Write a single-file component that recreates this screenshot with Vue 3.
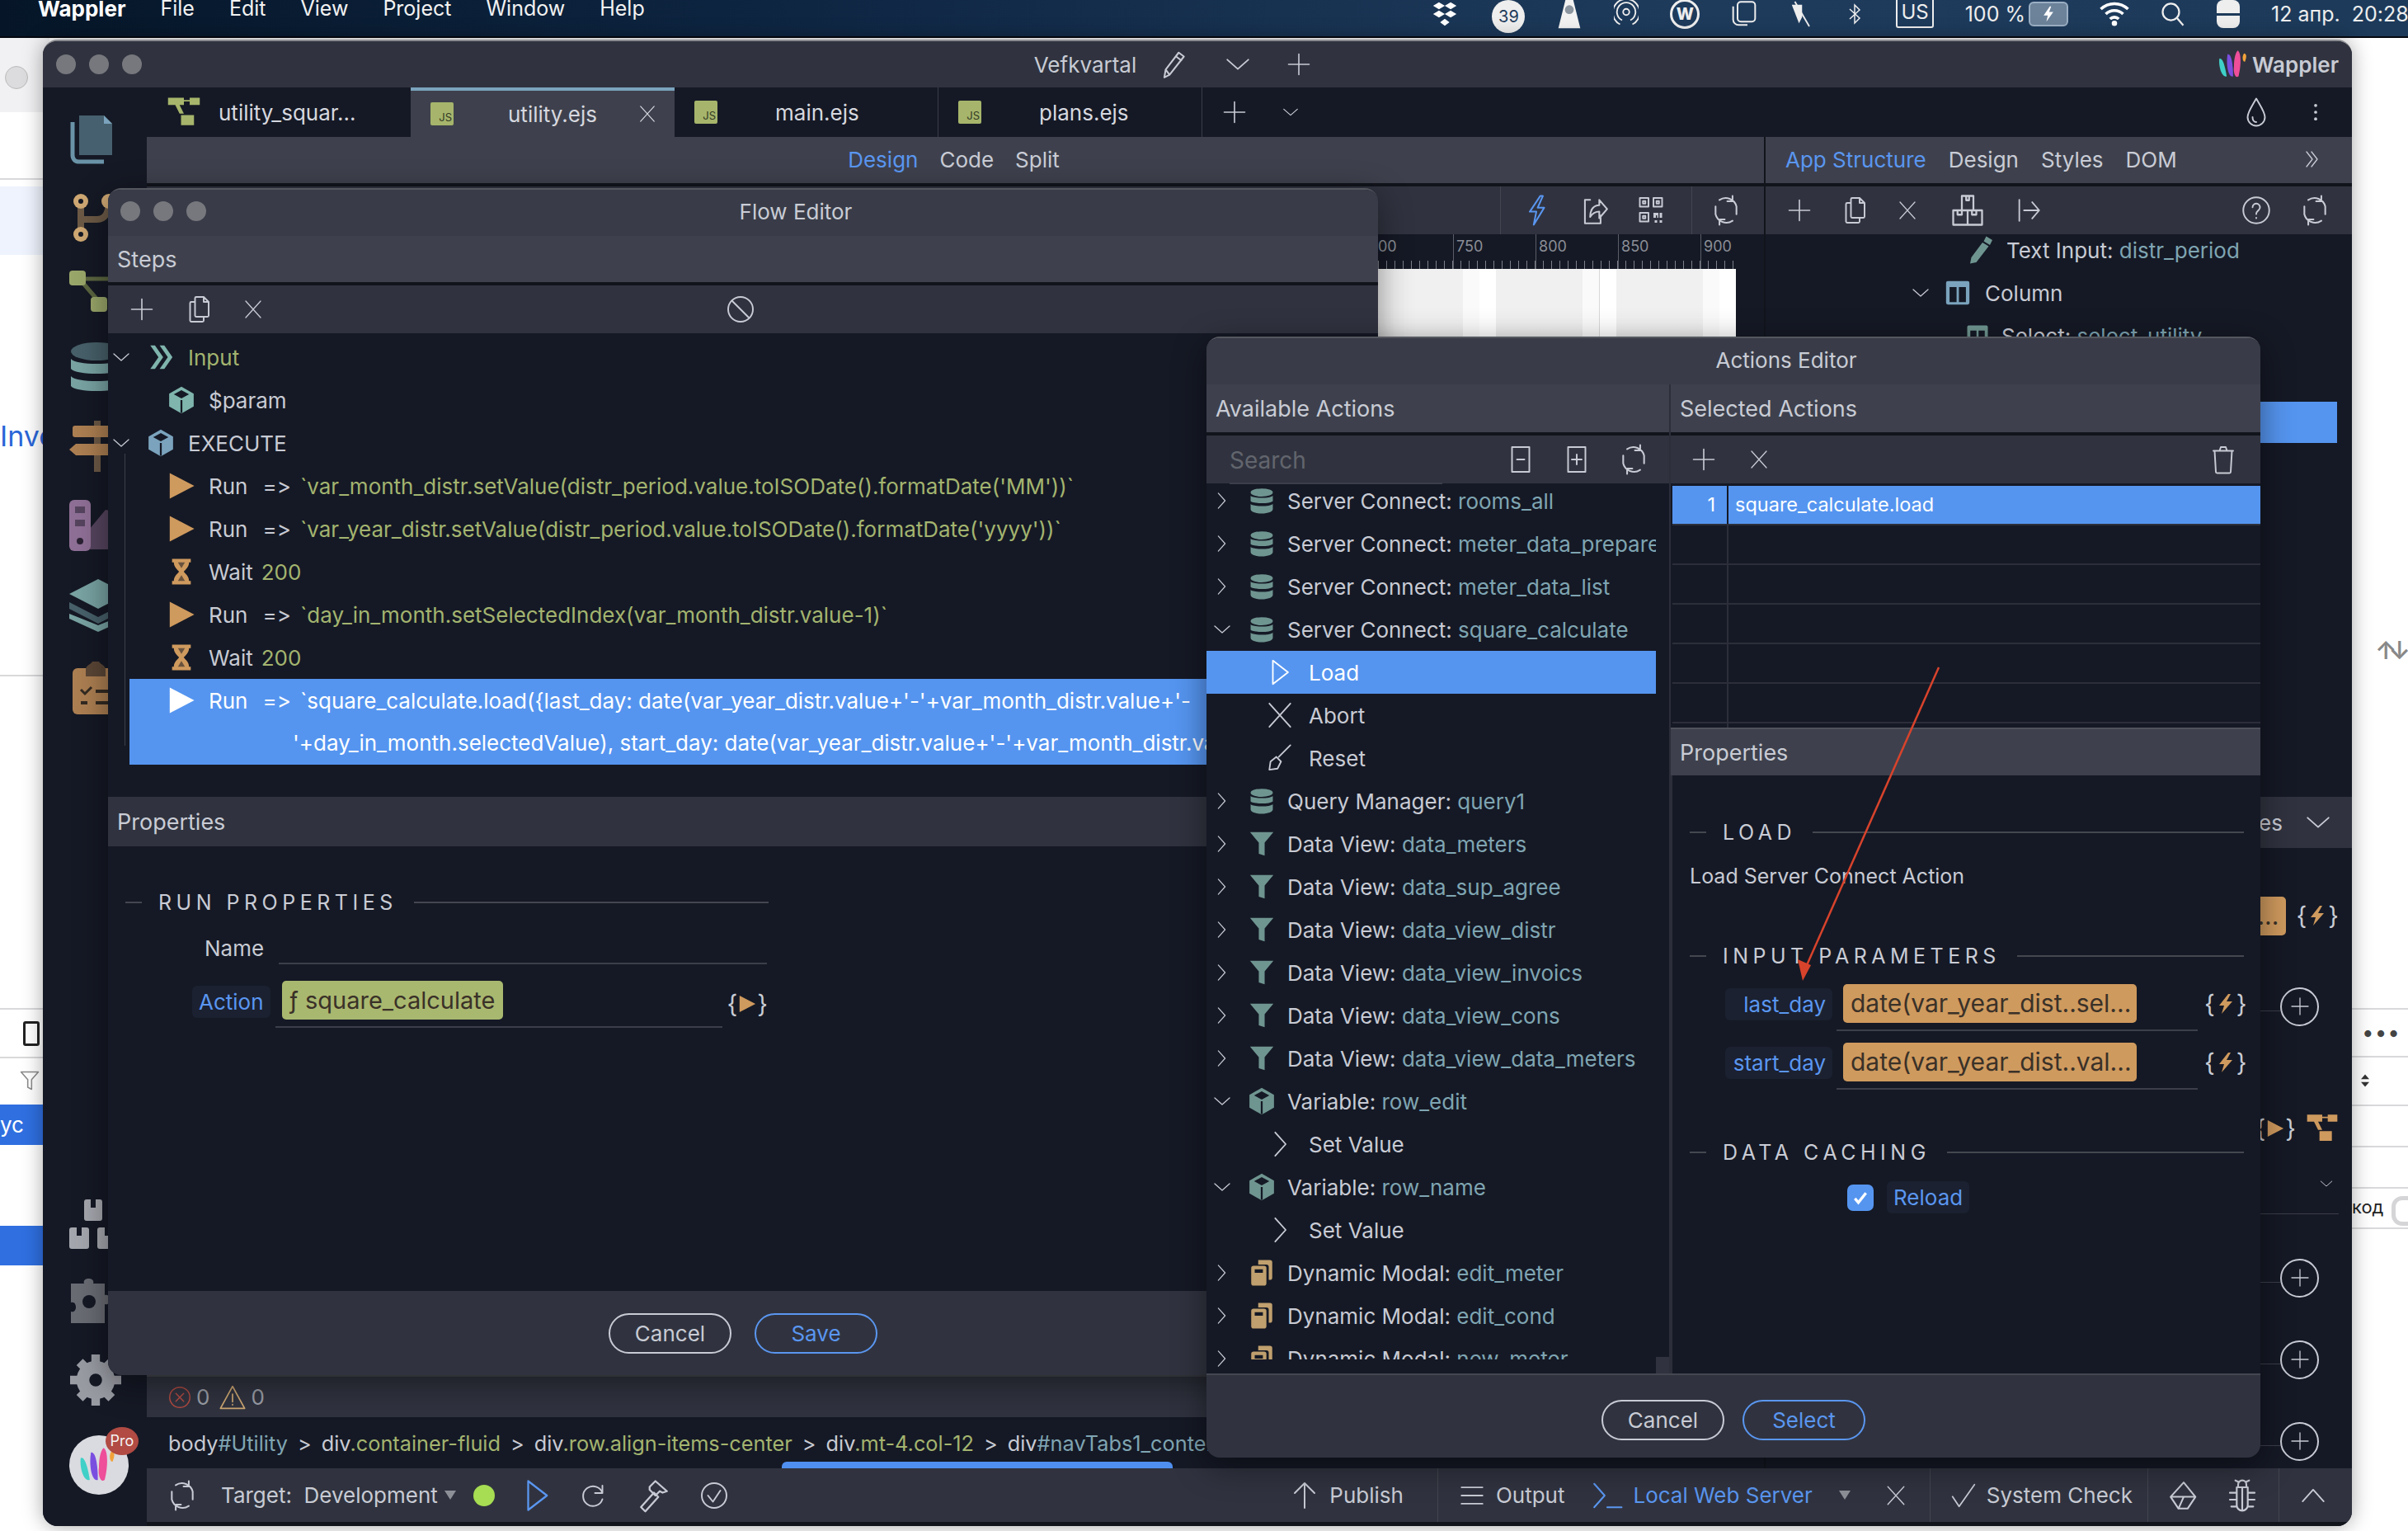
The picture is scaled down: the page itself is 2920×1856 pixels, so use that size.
<script setup>
import { h } from "vue";

const line = (d) =>
  `<path d="${d}" fill="none" stroke="currentColor" stroke-width="1.3" stroke-linecap="round" stroke-linejoin="round"/>`;
const solid = (d) => `<path d="${d}" fill="currentColor"/>`;

const icons = {
  plus: line("M12 2v20M2 12h20"),
  x: line("M3 2l18 20M21 2L3 22"),
  chevD: line("M3 8l9 8 9-8"),
  chevR: line("M8 2l9 10-9 10"),
  copy: line("M10 2h6l4 4v11a1 1 0 0 1-1 1h-9a1 1 0 0 1-1-1V3a1 1 0 0 1 1-1zM16 2v4h4M9 6H6a1 1 0 0 0-1 1v14a1 1 0 0 0 1 1h9a1 1 0 0 0 1-1v-3"),
  ban: '<circle cx="12" cy="12" r="10" fill="none" stroke="currentColor" stroke-width="1.3"/>' + line("M5 5l14 14"),
  pencil: line("M5 22l1-6L16 3l4 3L9 20zM14 6l4 3M6 16l3 4"),
  pencilSolid: solid("M17 1l5 3-2 4-5-3zM14 6l5 3L9 22l-5 1 1-5z"),
  drop: line("M12 1c4 7 7 11 7 15a7 7 0 0 1-14 0c0-4 3-8 7-15zM9 16c0 2 1 4 3 4"),
  dots: '<circle cx="12" cy="5" r="1.6" fill="currentColor"/><circle cx="12" cy="12" r="1.6" fill="currentColor"/><circle cx="12" cy="19" r="1.6" fill="currentColor"/>',
  bolt: line("M15 1L7 13h5l-2 10 8-13h-5l4-9z"),
  boltFill: solid("M15 0L4 14h6L7 24l13-15h-7l5-9z"),
  share: line("M9 4H5v18h12v-6M9 17c0-6 3-9 7-9V4l6 7-6 7v-5c-3 0-5 1-7 4z"),
  qr: line("M3 2h7v7H3zM14 2h7v7h-7zM3 14h7v7H3zM5.5 4.5h2v2h-2zM16.5 4.5h2v2h-2zM5.5 16.5h2v2h-2z") + solid("M14 14h4v4h-1v-2h-1v2h-2zM19 14h2v4h-2zM19 20h2v2h-2zM15 20h2v2h-2z"),
  refresh: line("M20 9a8.5 8.5 0 0 0-13-5M4 15a8.5 8.5 0 0 0 13 5M17 1v4h-4M7 23v-4h4M4 15V9M20 15V9"),
  help: '<circle cx="12" cy="12" r="10.5" fill="none" stroke="currentColor" stroke-width="1.3"/>' + line("M9 9.5a3 3 0 1 1 5 2.2c-1.2 1-2 1.6-2 3.3M12 18v.3"),
  box: line("M8 2h8v10H8zM11 2v3h2V2M2 12h20v10H2zM12 12v10M5 12v3h3v-3M15 12v3h3v-3"),
  indent: line("M4 3v18M8 12h13M15 5l6 7-6 7"),
  funnel: solid("M2 2h20l-7.5 9v11l-5-1.5V11z"),
  funnelLine: line("M3 3h18l-7 8v10l-4-2v-8z"),
  db: '<ellipse cx="12" cy="5" rx="9.5" ry="3.5" fill="currentColor"/>' + solid("M2.5 7.8c2 2.4 17 2.4 19 0v4.5c-2 2.4-17 2.4-19 0zM2.5 14.8c2 2.4 17 2.4 19 0v4.5c0 2-4 3.7-9.5 3.7s-9.5-1.7-9.5-3.7z"),
  cube: solid("M12 .5L22.5 6.5v11L12 23.5 1.5 17.5v-11z") + '<path d="M12 3.5L18.5 7 12 10.5 5.5 7z" fill="#151925"/><path d="M12 12v11" stroke="#151925" stroke-width="1.6"/>',
  play: solid("M2 1l21 11L2 23z"),
  playLine: line("M6 2l13 10L6 22z"),
  hourglass: solid("M4 1h16v3h-1.5c0 4-3 6-4.5 8 1.5 2 4.5 4 4.5 8H20v3H4v-3h1.5c0-4 3-6 4.5-8-1.5-2-4.5-4-4.5-8H4z") + '<path d="M9 4h6l-3 5zM12 15l-3 5h6z" fill="#151925" opacity=".55"/>',
  modal: solid("M9 1h10a2 2 0 0 1 2 2v13a2 2 0 0 1-2 2h-1V7a2 2 0 0 0-2-2H9zM5 6h9a2 2 0 0 1 2 2v13a2 2 0 0 1-2 2H5a2 2 0 0 1-2-2V8a2 2 0 0 1 2-2z") + '<rect x="6" y="9" width="7" height="3" fill="#151925"/>',
  trash: line("M5 5h14l-1 17a1 1 0 0 1-1 1H7a1 1 0 0 1-1-1zM4 5h16M9 5l1-3h4l1 3"),
  minusBox: line("M5 2h14v20H5zM9 12h6"),
  plusBox: line("M5 2h14v20H5zM8 12h8M12 8v8"),
  brush: line("M3 22l1-7 5-4 4 4-3 6zM11 11L21 1M9 11l4 4"),
  arrowUp: line("M12 2v20M4 10l8-8 8 8"),
  lines: line("M3 5h18M3 12h18M3 19h18"),
  term: line("M2 3l8 9-8 9M12 21h11"),
  check: line("M2 13l6 9L22 2"),
  eraser: line("M12 2l9 11-6 9H8l-6-9zM2 13h19M8 22l4-9"),
  bug: line("M8 6h8v13a4 4 0 0 1-8 0zM9 6V4a3 3 0 0 1 6 0v2M12 6v17M8 10H3M16 10h5M8 15H3M16 15h5M8 20H4M16 20h4M9 2L7 1M15 2l2-1"),
  caretUp: line("M3 17l9-10 9 10"),
  hammer: line("M3 20l9-10 3 3-9 10zM9 6l4-4 8 7-3 1-2-1-3 3-4-4z"),
  okCircle: '<circle cx="12" cy="12" r="10" fill="none" stroke="currentColor" stroke-width="1.3"/>' + line("M7 12l4 5 6-9"),
  redo: line("M19 10a8 8 0 1 0 0 5M19 4v6h-6"),
  errCircle: '<circle cx="12" cy="12" r="10.5" fill="none" stroke="currentColor" stroke-width="1.3"/>' + line("M8 8l8 8M16 8l-8 8"),
  warn: line("M12 2l11 20H1zM12 9v7M12 18.5v.3"),
  dbl: line("M7 3l7 9-7 9M13 3l7 9-7 9"),
  dblSolid: solid("M3 2h4l7 10-7 10H3l7-10zM11 2h4l7 10-7 10h-4l7-10z"),
  column: '<rect x="2" y="2" width="20" height="20" rx="1.5" fill="currentColor"/><path d="M5 7h6v13H5zM13 7h6v13h-6z" fill="#151925"/>',
  tree: solid("M1 2h11v5H9l3 6H9L6 7H1zM16 2h7v5h-7zM10 14h9v7h-9zM12 3.5h5v1h-5z"),
  sort: solid("M12 3l6 7H6zM12 21l-6-7h12z"),
};

const Icon = (props) =>
  h("svg", {
    viewBox: "0 0 24 24",
    width: props.w || props.s || 30,
    height: props.h || props.s || 30,
    class: "icon",
    innerHTML: icons[props.n],
  });
Icon.props = ["n", "s", "w", "h"];

const menuItems = ["File", "Edit", "View", "Project", "Window", "Help"];

const tabs = [
  { name: "utility_squar...", tree: true },
  { name: "utility.ejs", active: true },
  { name: "main.ejs" },
  { name: "plans.ejs" },
];

const flowRows = [
  { chev: true, icon: "dblSolid", cls: "teal", green: "Input", top: true },
  { icon: "cube", cls: "teal", text: "$param" },
  { chev: true, icon: "cube", cls: "steel", text: "EXECUTE", top: true },
  { icon: "play", cls: "orange", text: "Run", code: "`var_month_distr.setValue(distr_period.value.toISODate().formatDate('MM'))`" },
  { icon: "play", cls: "orange", text: "Run", code: "`var_year_distr.setValue(distr_period.value.toISODate().formatDate('yyyy'))`" },
  { icon: "hourglass", cls: "orange", text: "Wait", green: "200" },
  { icon: "play", cls: "orange", text: "Run", code: "`day_in_month.setSelectedIndex(var_month_distr.value-1)`" },
  { icon: "hourglass", cls: "orange", text: "Wait", green: "200" },
];

const actionRows = [
  { chev: "R", icon: "db", cls: "sage", key: "Server Connect:", val: "rooms_all" },
  { chev: "R", icon: "db", cls: "sage", key: "Server Connect:", val: "meter_data_prepare" },
  { chev: "R", icon: "db", cls: "sage", key: "Server Connect:", val: "meter_data_list" },
  { chev: "D", icon: "db", cls: "sage", key: "Server Connect:", val: "square_calculate" },
  { child: true, icon: "playLine", key: "Load", sel: true },
  { child: true, icon: "x", key: "Abort" },
  { child: true, icon: "brush", key: "Reset" },
  { chev: "R", icon: "db", cls: "sage", key: "Query Manager:", val: "query1" },
  { chev: "R", icon: "funnel", cls: "sage", key: "Data View:", val: "data_meters" },
  { chev: "R", icon: "funnel", cls: "sage", key: "Data View:", val: "data_sup_agree" },
  { chev: "R", icon: "funnel", cls: "sage", key: "Data View:", val: "data_view_distr" },
  { chev: "R", icon: "funnel", cls: "sage", key: "Data View:", val: "data_view_invoics" },
  { chev: "R", icon: "funnel", cls: "sage", key: "Data View:", val: "data_view_cons" },
  { chev: "R", icon: "funnel", cls: "sage", key: "Data View:", val: "data_view_data_meters" },
  { chev: "D", icon: "cube", cls: "sage", key: "Variable:", val: "row_edit" },
  { child: true, icon: "chevR", key: "Set Value" },
  { chev: "D", icon: "cube", cls: "sage", key: "Variable:", val: "row_name" },
  { child: true, icon: "chevR", key: "Set Value" },
  { chev: "R", icon: "modal", cls: "sand", key: "Dynamic Modal:", val: "edit_meter" },
  { chev: "R", icon: "modal", cls: "sand", key: "Dynamic Modal:", val: "edit_cond" },
  { chev: "R", icon: "modal", cls: "sand", key: "Dynamic Modal:", val: "new_meter" },
];

const crumbs = [
  ["body", "#Utility", "teal-text"],
  ["div", ".container-fluid", "green-text"],
  ["div", ".row.align-items-center", "green-text"],
  ["div", ".mt-4.col-12", "green-text"],
  ["div", "#navTabs1_content", "teal-text"],
];

const rulerLabels = ["700", "750", "800", "850", "900"];
const selectedRows = [1, 2, 3, 4, 5, 6];
</script>

<template>
  <div class="desktop">
    <!-- browser page behind the app, only its edges are visible -->
    <div class="behind">
      <div class="left-head"></div>
      <div class="left-circle"></div>
      <div class="left-band"></div>
      <div class="left-invo">Invo</div>
      <div class="hr hr-l1"></div>
      <div class="hr hr-l2"></div>
      <div class="hr hr-l3"></div>
      <div class="left-device"></div>
      <Icon n="funnelLine" :s="28" class="left-funnel" />
      <div class="left-yc">ус</div>
      <div class="left-blue"></div>
      <div class="hr hr-r1"></div>
      <div class="hr hr-r2"></div>
      <div class="hr hr-r3"></div>
      <div class="hr hr-r4"></div>
      <div class="hr hr-r5"></div>
      <div class="right-dots">•••</div>
      <div class="right-kod">код</div>
      <div class="right-toggle"></div>
      <Icon n="sort" :s="20" class="right-sort" />
      <div class="right-arrows">↑↓</div>
    </div>

    <header class="menubar">
      <b class="app-name">Wappler</b>
      <span v-for="m in menuItems" :key="m" class="menu-item">{{ m }}</span>
      <span class="grow"></span>
      <div class="tray">
        <svg width="38" height="34" viewBox="0 0 24 24" class="dropbox"><path d="M7 2l5 3-5 3-5-3zM17 2l5 3-5 3-5-3zM7 9l5 3-5 3-5-3zM17 9l5 3-5 3-5-3zM12 16l4 3-4 3-4-3z" fill="#fff"/></svg>
        <span class="tray-badge">39</span>
        <svg width="32" height="40" viewBox="0 0 24 30"><path d="M9 0h6l7 28H2z" fill="#f2f2f2"/><circle cx="12" cy="11" r="4" fill="#8c96a0"/></svg>
        <svg width="30" height="34" viewBox="0 0 24 24" fill="none" stroke="#eee" stroke-width="1.5"><circle cx="12" cy="10" r="3"/><path d="M8 18a9 9 0 1 1 8 0M6 22a13 13 0 1 1 12 0"/></svg>
        <span class="tray-w">W</span>
        <svg width="32" height="34" viewBox="0 0 24 24" fill="none" stroke="#eee" stroke-width="1.5"><rect x="6" y="1" width="16" height="18" rx="3"/><path d="M2 5v12a5 5 0 0 0 5 5h8"/></svg>
        <svg width="30" height="36" viewBox="0 0 24 24"><path d="M3 3h10v12l-3 6z" fill="#eee"/><path d="M6 0l14 24" stroke="#eee" stroke-width="1.5"/></svg>
        <svg width="24" height="36" viewBox="0 0 24 24" fill="none" stroke="#eee" stroke-width="1.5"><path d="M6 6l12 11-6 6V1l6 6L6 18"/></svg>
        <span class="tray-us">US</span>
        <span class="tray-text">100 %</span>
        <span class="tray-bat"><svg width="20" height="20" viewBox="0 0 24 24"><path d="M14 1L5 14h6l-2 9 10-14h-6l3-8z" fill="#fff"/></svg></span>
        <svg width="36" height="30" viewBox="0 0 24 20" fill="none" stroke="#fff" stroke-width="2.4"><path d="M1 6a16 16 0 0 1 22 0M5 10a10 10 0 0 1 14 0M8.5 14a5 5 0 0 1 7 0"/><circle cx="12" cy="17.5" r="1" fill="#fff"/></svg>
        <svg width="30" height="30" viewBox="0 0 24 24" fill="none" stroke="#eee" stroke-width="1.8"><circle cx="10" cy="10" r="8"/><path d="M16 16l6 7"/></svg>
        <span class="tray-cc"></span>
        <span class="tray-text clock">12 апр.&nbsp; 20:28</span>
      </div>
    </header>

    <div class="app-window">
      <div class="titlebar">
        <div class="lights"><i></i><i></i><i></i></div>
        <div class="title-center">
          <span class="title-name">Vefkvartal</span>
          <Icon n="pencil" :s="38" />
          <Icon n="chevD" :s="34" class="ml" />
          <Icon n="plus" :s="30" class="ml" />
        </div>
        <div class="title-logo">
          <svg width="40" height="36" viewBox="0 0 36 32">
            <path d="M2 10c3-2 6 6 8 19-5 2-9-10-8-19z" fill="#3fd0c8" />
            <path d="M11 5c4-1 6 10 6 24-5 2-8-12-6-24z" fill="#7a4fe0" />
            <path d="M22 1c4 2 4 16 1 28-4 3-6-5-5-11 0-6 1-14 4-17z" fill="#ee4e9a" />
            <path d="M29 4c4 1 2 6 1 9-2 1-4-5-1-9z" fill="#f2a23a" />
          </svg>
          <span>Wappler</span>
        </div>
      </div>

      <div class="app-body">
        <nav class="sidebar">
          <div class="side-top">
            <svg width="56" height="60" viewBox="0 0 56 60"><path d="M12 0h30l10 10v38H12z" fill="#47606f" /><path d="M42 0l10 10H42z" fill="#7ba3bd" /><path d="M4 8v40c0 5 3 8 8 8h30" fill="none" stroke="#6a93a8" stroke-width="5" /></svg>
            <svg width="68" height="60" viewBox="0 0 68 60"><path d="M14 10v40M14 32h20c8 0 14-6 14-22" stroke="#6d5a46" stroke-width="8" fill="none" /><circle cx="14" cy="10" r="9" fill="#cfa873" /><circle cx="14" cy="10" r="3" fill="#151925" /><circle cx="48" cy="10" r="9" fill="#cfa873" /><circle cx="14" cy="50" r="9" fill="#cfa873" /><circle cx="14" cy="50" r="3" fill="#151925" /></svg>
            <svg width="70" height="52" viewBox="0 0 70 52"><path d="M10 10h50M14 12l24 28" stroke="#5c6640" stroke-width="5" /><rect x="0" y="0" width="20" height="18" rx="4" fill="#9aa76a" /><rect x="26" y="32" width="20" height="18" rx="4" fill="#9aa76a" /></svg>
            <svg width="66" height="62" viewBox="0 0 66 62"><ellipse cx="33" cy="12" rx="31" ry="11" fill="#47606a" /><path d="M2 21c6 8 56 8 62 0v12c-6 8-56 8-62 0zM2 42c6 8 56 8 62 0v12c-6 8-56 8-62 0z" fill="#79a3a3" /></svg>
            <svg width="70" height="62" viewBox="0 0 70 62"><rect x="30" y="0" width="8" height="62" fill="#6d5a46" /><rect x="4" y="6" width="62" height="14" rx="3" fill="#ad7f52" /><path d="M8 28h56v14H8L0 35z" fill="#ad7f52" /></svg>
            <svg width="70" height="62" viewBox="0 0 70 62"><path d="M24 36l20-24 20 4v44H20z" fill="#56445f" /><rect x="0" y="0" width="26" height="62" rx="6" fill="#8f6f96" /><rect x="7" y="8" width="12" height="8" fill="#56445f" /><rect x="7" y="24" width="12" height="8" fill="#56445f" /><circle cx="13" cy="50" r="4" fill="#2a2233" /></svg>
            <svg width="70" height="64" viewBox="0 0 70 64"><path d="M35 0l35 18-35 18L0 18z" fill="#79a3a3" /><path d="M0 28l35 18 35-18v8L35 54 0 36z" fill="#47606a" /><path d="M0 42l35 14 35-14v6L35 64 0 48z" fill="#79a3a3" /></svg>
            <svg width="66" height="66" viewBox="0 0 66 66"><rect x="4" y="10" width="58" height="56" rx="6" fill="#ad7f52" /><path d="M20 12c0-6 6-6 8-10h8c2 4 8 4 8 10v8H20z" fill="#5b4636" /><path d="M14 36l5 5 8-8" stroke="#332a22" stroke-width="3" fill="none" /><path d="M32 38h24M32 52h24M14 52h8" stroke="#332a22" stroke-width="4" /></svg>
          </div>
          <div class="side-bottom">
            <svg width="58" height="60" viewBox="0 0 58 60"><rect x="18" y="0" width="22" height="26" rx="3" fill="#a5a7ae" /><rect x="0" y="34" width="24" height="26" rx="3" fill="#a5a7ae" /><rect x="34" y="34" width="24" height="26" rx="3" fill="#a5a7ae" /><path d="M26 0h6v10h-6zM9 34h6v10H9zM43 34h6v10h-6z" fill="#151925" /></svg>
            <svg width="60" height="56" viewBox="0 0 60 56"><path d="M2 6h16c-3-8 14-8 11 0h14v14c8-3 8 14 0 11v23H2V40c8 3 8-14 0-11z" fill="#6a6c74" /><circle cx="24" cy="28" r="8" fill="#151925" /></svg>
            <svg width="64" height="62" viewBox="0 0 24 24"><circle cx="12" cy="12" r="9" fill="#9a9ca4" /><circle cx="12" cy="12" r="3" fill="#151925" /><path d="M10 0h4v4h-4zM10 20h4v4h-4zM0 10h4v4H0zM20 10h4v4h-4zM3 5l3-3 3 3-3 3zM15 19l3-3 3 3-3 3zM3 19l3-3 3 3-3 3zM15 5l3-3 3 3-3 3z" fill="#9a9ca4" /></svg>
            <div class="avatar">
              <svg width="50" height="50" viewBox="0 0 36 32"><path d="M2 10c3-2 6 6 8 19-5 2-9-10-8-19z" fill="#3fd0c8" /><path d="M11 5c4-1 6 10 6 24-5 2-8-12-6-24z" fill="#7a4fe0" /><path d="M22 1c4 2 4 16 1 28-4 3-6-5-5-11 0-6 1-14 4-17z" fill="#ee4e9a" /><path d="M29 4c4 1 2 6 1 9-2 1-4-5-1-9z" fill="#f2a23a" /></svg>
              <span class="pro">Pro</span>
            </div>
          </div>
        </nav>

        <div class="content">
          <div class="tabs">
            <div v-for="t in tabs" :key="t.name" class="tab" :class="{ active: t.active }">
              <Icon v-if="t.tree" n="tree" :s="42" class="tab-tree" />
              <span v-else class="js-badge">JS</span>
              <span class="tab-name">{{ t.name }}</span>
              <Icon v-if="t.active" n="x" :s="22" class="tab-close" />
            </div>
            <Icon n="plus" :s="30" class="tab-plus" />
            <Icon n="chevD" :s="22" class="tab-more" />
            <span class="grow"></span>
            <Icon n="drop" :s="36" />
            <Icon n="dots" :s="28" class="tab-dots" />
          </div>

          <div class="work">
            <section class="design">
              <div class="head design-head">
                <span class="link">Design</span><span>Code</span><span>Split</span>
              </div>
              <div class="design-tools">
                <span class="grow"></span>
                <div class="tool-group">
                  <Icon n="bolt" :s="38" class="blue" />
                  <Icon n="share" :s="38" />
                  <Icon n="qr" :s="36" />
                </div>
                <div class="tool-group last"><Icon n="refresh" :s="38" /></div>
              </div>
              <div class="ruler-wrap">
                <div class="ruler">
                  <span v-for="r in rulerLabels" :key="r" class="ruler-cell">{{ r }}</span>
                </div>
                <div class="canvas">
                  <i></i><i></i><i></i>
                </div>
              </div>
              <span class="grow"></span>
              <div class="errors">
                <Icon n="errCircle" :s="28" class="red" /><span>0</span>
                <Icon n="warn" :s="32" class="sand-text" /><span>0</span>
              </div>
              <div class="crumbs">
                <template v-for="(c, i) in crumbs" :key="i">
                  <span v-if="i" class="crumb-sep">&gt;</span>
                  <span>{{ c[0] }}<span :class="c[2]">{{ c[1] }}</span></span>
                </template>
                <i class="crumb-scroll"></i>
              </div>
            </section>

            <aside class="side">
              <div class="head side-head">
                <span class="link">App Structure</span><span>Design</span><span>Styles</span><span>DOM</span>
                <span class="grow"></span>
                <Icon n="dbl" :s="24" />
              </div>
              <div class="side-tools">
                <Icon n="plus" :s="30" /><Icon n="copy" :s="36" /><Icon n="x" :s="24" />
                <Icon n="box" :s="42" class="tool-box" /><Icon n="indent" :s="34" class="tool-indent" />
                <span class="grow"></span>
                <Icon n="help" :s="36" /><Icon n="refresh" :s="38" />
              </div>
              <div class="side-tree">
                <div class="s-row s-input"><Icon n="pencilSolid" :s="36" class="sage" /><span>Text Input: <em>distr_period</em></span></div>
                <div class="s-row s-col"><Icon n="chevD" :s="24" /><Icon n="column" :s="34" class="steel" /><span>Column</span></div>
                <div class="s-row s-input"><Icon n="column" :s="30" class="sage" /><span>Select: <em>select_utility</em></span></div>
                <div class="s-blue"></div>
              </div>
              <div class="head side-props">
                <span class="grow"></span><span class="tail">Properties</span>
                <Icon n="chevD" :s="34" />
              </div>
              <div class="side-rows">
                <div class="sr sr-orange">
                  <span class="pill orange-pill">date(var...</span>
                  <span class="braces">{<Icon n="boltFill" :s="24" class="orange" />}</span>
                </div>
                <div class="sr sr-plus"><i></i><span class="round-plus"><Icon n="plus" :s="24" /></span></div>
                <div class="sr sr-tree">
                  <span class="braces">{<Icon n="play" :s="22" class="orange" />}</span>
                  <Icon n="tree" :s="40" class="orange" />
                </div>
                <div class="sr sr-chev"><Icon n="chevD" :s="18" /></div>
                <div class="sr sr-plus mt1"><i></i><span class="round-plus"><Icon n="plus" :s="24" /></span></div>
                <div class="sr sr-plus"><i></i><span class="round-plus"><Icon n="plus" :s="24" /></span></div>
                <div class="sr sr-plus"><i></i><span class="round-plus"><Icon n="plus" :s="24" /></span></div>
              </div>
            </aside>
          </div>

          <footer class="bottom-bar">
            <div class="bb-left">
              <Icon n="refresh" :s="38" class="bb-sync" />
              <span class="bb-target">Target:&nbsp; Development</span>
              <span class="caret"></span>
              <span class="green-dot"></span>
              <Icon n="playLine" :s="42" class="blue" />
              <Icon n="redo" :s="36" />
              <Icon n="hammer" :s="42" class="bb-nudge" />
              <Icon n="okCircle" :s="36" class="bb-nudge" />
            </div>
            <span class="grow"></span>
            <div class="bb-right">
              <div class="bb-cell publish"><Icon n="arrowUp" :s="36" /><span>Publish</span></div>
              <div class="bb-cell output">
                <Icon n="lines" :s="34" /><span>Output</span>
                <Icon n="term" :s="38" class="blue term" /><span class="link">Local Web Server</span>
                <span class="caret"></span>
                <Icon n="x" :s="26" class="out-x" />
              </div>
              <div class="bb-cell syscheck"><Icon n="check" :s="32" /><span>System Check</span></div>
              <div class="bb-cell gap2"><Icon n="eraser" :s="38" /><Icon n="bug" :s="40" /></div>
              <div class="bb-cell"><Icon n="caretUp" :s="34" /></div>
            </div>
          </footer>
        </div>
      </div>
    </div>

    <!-- Flow Editor window -->
    <div class="dialog flow">
      <div class="dlg-title">
        <div class="lights"><i></i><i></i><i></i></div>
        <span>Flow Editor</span>
      </div>
      <div class="head panel-head">Steps</div>
      <div class="flow-tools">
        <Icon n="plus" :s="30" /><Icon n="copy" :s="36" /><Icon n="x" :s="24" />
        <Icon n="ban" :s="36" class="flow-ban" />
      </div>
      <div class="flow-tree">
        <i class="flow-guide"></i>
        <div v-for="(r, i) in flowRows" :key="i" class="f-row" :class="{ top: r.top }">
          <Icon v-if="r.chev" n="chevD" :s="24" class="f-chev" />
          <Icon :n="r.icon" :s="34" :class="r.cls" />
          <span v-if="r.text">{{ r.text }}</span>
          <span v-if="r.code" class="arrow-sign">=&gt;</span>
          <span v-if="r.code" class="green-text">{{ r.code }}</span>
          <span v-if="r.green" class="green-text" :class="{ 'wait-val': r.text }">{{ r.green }}</span>
        </div>
        <div class="f-selected">
          <div class="f-row">
            <Icon n="play" :s="34" class="white" />
            <span>Run</span><span class="arrow-sign">=&gt;</span>
            <span>`square_calculate.load({last_day: date(var_year_distr.value+'-'+var_month_distr.value+'-</span>
          </div>
          <div class="f-row wrapped">
            '+day_in_month.selectedValue), start_day: date(var_year_distr.value+'-'+var_month_distr.value+'-'+day_in_month.selectedValue))})`
          </div>
        </div>
      </div>
      <div class="head panel-head props-head">Properties</div>
      <div class="flow-props">
        <div class="legend wide"><i></i><span>RUN PROPERTIES</span><b></b></div>
        <div class="name-row"><label>Name</label><span class="name-input"></span></div>
        <div class="action-row">
          <label class="tag">Action</label>
          <span class="field">
            <span class="pill green-pill">ƒ square_calculate</span>
          </span>
          <span class="braces">{<Icon n="play" :s="22" class="orange" />}</span>
        </div>
      </div>
      <div class="dlg-footer">
        <button class="btn">Cancel</button>
        <button class="btn primary">Save</button>
      </div>
    </div>

    <!-- Actions Editor window -->
    <div class="dialog actions">
      <div class="dlg-title"><span>Actions Editor</span></div>
      <div class="act-cols">
        <div class="act-left">
          <div class="head panel-head">Available Actions</div>
          <div class="act-tools">
            <span class="search">Search</span>
            <span class="grow"></span>
            <Icon n="minusBox" :s="36" /><Icon n="plusBox" :s="36" /><Icon n="refresh" :s="38" />
          </div>
          <div class="act-list">
            <div
              v-for="(r, i) in actionRows"
              :key="i"
              class="a-row"
              :class="{ sel: r.sel, child: r.child }"
            >
              <Icon v-if="r.chev" :n="r.chev === 'D' ? 'chevD' : 'chevR'" :s="r.chev === 'D' ? 24 : 22" class="a-chev" />
              <Icon :n="r.icon" :s="34" :class="r.cls" />
              <span>{{ r.key }} <em v-if="r.val">{{ r.val }}</em></span>
            </div>
          </div>
          <i class="a-scroll"></i>
        </div>
        <div class="act-right">
          <div class="head panel-head">Selected Actions</div>
          <div class="act-tools sel-tools">
            <Icon n="plus" :s="30" /><Icon n="x" :s="24" />
            <span class="grow"></span>
            <Icon n="trash" :s="36" />
          </div>
          <div class="sel-table">
            <div class="sel-row on"><span class="num">1</span><span class="cell">square_calculate.load</span></div>
            <div v-for="n in selectedRows" :key="n" class="sel-row"><span class="num"></span><span class="cell"></span></div>
          </div>
          <div class="head panel-head act-props">Properties</div>
          <div class="act-form">
            <div class="legend"><i></i><span>LOAD</span><b></b></div>
            <p class="form-desc">Load Server Connect Action</p>
            <div class="legend"><i></i><span>INPUT PARAMETERS</span><b></b></div>
            <div class="param">
              <label class="tag">last_day</label>
              <span class="field"><span class="pill orange-pill">date(var_year_dist..sel...</span></span>
              <span class="braces">{<Icon n="boltFill" :s="24" class="orange" />}</span>
            </div>
            <div class="param">
              <label class="tag">start_day</label>
              <span class="field"><span class="pill orange-pill">date(var_year_dist..val...</span></span>
              <span class="braces">{<Icon n="boltFill" :s="24" class="orange" />}</span>
            </div>
            <div class="legend cache"><i></i><span>DATA CACHING</span><b></b></div>
            <div class="reload">
              <span class="check">
                <svg width="20" height="20" viewBox="0 0 24 24"><path d="M4 13l5 6L20 5" fill="none" stroke="#fff" stroke-width="4" /></svg>
              </span>
              <label class="tag">Reload</label>
            </div>
          </div>
        </div>
      </div>
      <div class="dlg-footer">
        <button class="btn">Cancel</button>
        <button class="btn primary">Select</button>
      </div>
    </div>

    <svg class="red-arrow" width="2920" height="1856" viewBox="0 0 2920 1856">
      <path d="M2351 809L2191 1170" stroke="#d8432c" stroke-width="2.5" fill="none" />
      <path d="M2186 1189l-6-26 16 7z" fill="#d8432c" />
    </svg>
  </div>
</template>

<style>
html,
body {
  margin: 0;
  background: #fff;
}
</style>

<style scoped>
.desktop {
  position: relative;
  width: 2920px;
  height: 1856px;
  overflow: hidden;
  font-family: Inter, "Noto Sans", sans-serif;
  font-size: 26px;
  font-variant-ligatures: none;
  font-feature-settings: "calt" 0, "liga" 0;
  color: #c8cbd4;
  background: #fff;
}
.icon {
  display: block;
  flex: none;
  overflow: visible;
}
.grow {
  flex: 1;
}
em {
  font-style: normal;
  color: #7fa5b2;
}

/* page behind */
.behind div,
.behind .right-sort,
.behind .left-funnel {
  position: absolute;
}
.left-head {
  left: 0;
  top: 46px;
  width: 60px;
  height: 90px;
  background: #f1f1f3;
}
.left-circle {
  left: 6px;
  top: 80px;
  width: 26px;
  height: 26px;
  border-radius: 50%;
  background: #dcdcde;
  border: 1px solid #bbb;
}
.left-band {
  left: 0;
  top: 226px;
  width: 60px;
  height: 83px;
  background: #eef3fd;
}
.left-invo {
  left: 0;
  top: 508px;
  color: #2a66d8;
  font-size: 34px;
}
.hr {
  height: 2px;
  background: #d9d9dc;
}
.hr-l1 {
  left: 0;
  top: 216px;
  width: 60px;
}
.hr-l2 {
  left: 0;
  top: 818px;
  width: 60px;
}
.hr-l3 {
  left: 0;
  top: 1222px;
  width: 60px;
  box-shadow: 0 59px 0 #d9d9dc;
}
.left-device {
  left: 28px;
  top: 1238px;
  width: 14px;
  height: 24px;
  border: 3px solid #222;
  border-radius: 3px;
}
.left-funnel {
  left: 22px;
  top: 1296px;
  color: #888;
}
.left-yc {
  left: 0;
  top: 1339px;
  width: 60px;
  height: 49px;
  line-height: 50px;
  background: #2f6fe0;
  color: #fff;
}
.left-blue {
  left: 0;
  top: 1486px;
  width: 60px;
  height: 48px;
  background: #2f6fe0;
}
.hr-r1 {
  left: 2850px;
  right: 0;
  top: 1222px;
}
.hr-r2 {
  left: 2850px;
  right: 0;
  top: 1280px;
}
.hr-r3 {
  left: 2850px;
  right: 0;
  top: 1339px;
}
.hr-r4 {
  left: 2850px;
  right: 0;
  top: 1389px;
}
.hr-r5 {
  left: 2850px;
  right: 0;
  top: 1439px;
  box-shadow: 0 49px 0 #d9d9dc;
}
.right-dots {
  left: 2864px;
  top: 1236px;
  color: #444;
  letter-spacing: 1px;
}
.right-kod {
  left: 2852px;
  top: 1450px;
  color: #222;
  font-size: 22px;
}
.right-toggle {
  left: 2900px;
  top: 1450px;
  width: 40px;
  height: 26px;
  border-radius: 13px;
  border: 5px solid #d5d5d8;
  background: #fff;
}
.right-sort {
  left: 2858px;
  top: 1300px;
  color: #333;
}
.right-arrows {
  left: 2880px;
  top: 770px;
  color: #888;
  font-size: 30px;
  font-weight: 600;
  letter-spacing: -10px;
  white-space: nowrap;
}

/* menu bar */
.menubar {
  position: absolute;
  left: 0;
  top: 0;
  width: 100%;
  height: 46px;
  box-sizing: border-box;
  padding: 0 0 24px 46px;
  display: flex;
  align-items: center;
  gap: 42px;
  color: #f2f2f2;
  background: linear-gradient(90deg, #061628 0%, #0d2440 30%, #1e3b5c 70%, #1d3a5a 100%);
  border-bottom: 2px solid #05080f;
}
.app-name {
  font-weight: 700;
  color: #fff;
}
.menu-item {
  font-size: 25px;
}
.tray {
  display: flex;
  align-items: center;
  gap: 38px;
  color: #eee;
  margin: 14px 0 0 0;
  white-space: nowrap;
}
.tray-badge {
  width: 40px;
  height: 40px;
  margin-top: 6px;
  border-radius: 50%;
  background: #eee;
  color: #1d3a5a;
  font-size: 20px;
  line-height: 40px;
  text-align: center;
}
.tray-w {
  width: 30px;
  height: 30px;
  border: 3px solid #eee;
  border-radius: 50%;
  text-align: center;
  line-height: 30px;
  font-size: 20px;
  font-weight: 800;
}
.tray-us {
  border: 2px solid #eee;
  border-radius: 3px;
  padding: 0 4px;
  font-size: 24px;
  line-height: 34px;
  margin-top: -4px;
}
.tray-text {
  font-size: 25px;
}
.tray-bat {
  width: 44px;
  height: 26px;
  margin-left: -34px;
  border: 2px solid #9cb0c4;
  border-radius: 6px;
  display: flex;
  align-items: center;
  justify-content: center;
  background: #6c839a;
}
.tray-cc {
  width: 28px;
  height: 34px;
  border-radius: 8px;
  background: linear-gradient(#eee 0 46%, transparent 46% 56%, #eee 56%);
}
.clock {
  width: 166px;
  overflow: visible;
}

/* main window */
.app-window {
  position: absolute;
  left: 52px;
  top: 48px;
  width: 2800px;
  height: 1802px;
  display: flex;
  flex-direction: column;
  border-radius: 18px;
  overflow: hidden;
  background: #151925;
  border-top: 2px solid #8a8b90;
  box-sizing: border-box;
  box-shadow: 0 0 24px rgba(0, 0, 0, 0.35);
}
.titlebar {
  position: relative;
  height: 56px;
  flex: none;
  display: flex;
  align-items: center;
  justify-content: center;
  background: #30333f;
}
.lights {
  position: absolute;
  left: 16px;
  display: flex;
  gap: 16px;
}
.lights i {
  width: 24px;
  height: 24px;
  border-radius: 50%;
  background: #77787d;
}
.title-center {
  display: flex;
  align-items: center;
  gap: 26px;
  margin-left: -60px;
}
.title-center .ml {
  margin-left: 16px;
}
.title-logo {
  position: absolute;
  right: 16px;
  display: flex;
  align-items: center;
  gap: 2px;
  font-weight: 600;
}
.app-body {
  flex: 1;
  display: flex;
  min-height: 0;
}
.sidebar {
  width: 126px;
  flex: none;
  box-sizing: border-box;
  padding: 34px 0 38px 32px;
  display: flex;
  flex-direction: column;
  justify-content: space-between;
  background: #151925;
}
.side-top {
  display: flex;
  flex-direction: column;
  gap: 34px;
}
.side-bottom {
  display: flex;
  flex-direction: column;
  gap: 36px;
}
.avatar {
  position: relative;
  width: 72px;
  height: 72px;
  border-radius: 50%;
  background: #dadbe0;
  display: flex;
  align-items: center;
  justify-content: center;
}
.pro {
  position: absolute;
  right: -12px;
  top: -10px;
  width: 40px;
  height: 34px;
  border-radius: 50%;
  background: #b14b43;
  color: #f3f3f3;
  font-size: 18px;
  line-height: 34px;
  text-align: center;
}
.content {
  flex: 1;
  min-width: 0;
  display: flex;
  flex-direction: column;
}

/* tabs */
.tabs {
  height: 60px;
  flex: none;
  display: flex;
  align-items: center;
  padding-right: 30px;
  background: #151925;
}
.tab {
  position: relative;
  width: 320px;
  height: 60px;
  box-sizing: border-box;
  display: flex;
  align-items: center;
  padding-left: 24px;
  border-right: 1px solid #3a3d48;
  color: #d6d8df;
}
.tab:first-child {
  border-right: 0;
}
.tab-tree {
  color: #a6b56b;
  margin: 0 21px 0 0;
}
.tab.active {
  background: #3e414d;
  border-top: 4px solid #7ba3bd;
  border-right: 0;
}
.js-badge {
  width: 28px;
  height: 28px;
  flex: none;
  border-radius: 2px;
  background: #a6b56b;
  color: #333a25;
  font-size: 13px;
  line-height: 36px;
  text-align: right;
  padding-right: 2px;
  box-sizing: border-box;
}
.tab .tab-name {
  margin-left: 70px;
}
.tab.active .tab-name {
  margin-left: 66px;
}
.tab:first-child .tab-name {
  margin-left: 0;
}
.tab-close {
  position: absolute;
  right: 22px;
}
.tab-plus {
  margin-left: 24px;
}
.tab-more {
  margin-left: 42px;
}
.tab-dots {
  margin-left: 40px;
}

/* work area */
.work {
  flex: 1;
  min-height: 0;
  display: flex;
}
.head {
  flex: none;
  height: 56px;
  box-sizing: border-box;
  display: flex;
  align-items: center;
  background: #3e414d;
  color: #c9ccd5;
}
.link {
  color: #5a96f0;
}
.design {
  flex: 1;
  min-width: 0;
  display: flex;
  flex-direction: column;
  background: #151925;
}
.design-head {
  justify-content: center;
  gap: 26px;
  border-bottom: 4px solid #12141c;
  height: 60px;
  padding: 0 4px 2px 0;
}
.design-tools {
  height: 58px;
  flex: none;
  display: flex;
  background: #30333f;
}
.tool-group {
  display: flex;
  align-items: center;
  gap: 32px;
  padding: 0 31px 0 24px;
  border-left: 1px solid #43464f;
}
.tool-group.last {
  width: 88px;
  box-sizing: border-box;
  padding-left: 22px;
  padding-right: 0;
}
.blue {
  color: #5a96f0;
}
.ruler-wrap {
  flex: none;
  margin-left: 1493px;
  width: 434px;
  margin-right: 34px;
}
.ruler {
  height: 42px;
  display: flex;
  background: #151925;
  background-image: repeating-linear-gradient(90deg, #7c7f88 0 1px, transparent 1px 10px);
  background-size: 100% 10px;
  background-repeat: no-repeat;
  background-position: 0 100%;
}
.ruler-cell {
  width: 100px;
  flex: none;
  box-sizing: border-box;
  padding-left: 3px;
  border-left: 1px solid #5b5e67;
  color: #8b8e96;
  font-size: 18px;
  line-height: 30px;
  height: 42px;
}
.ruler-cell:first-child {
  width: 91px;
  border-left: 0;
  padding-left: 0;
  text-indent: -10px;
  overflow: hidden;
}
.canvas {
  height: 82px;
  display: flex;
  background: linear-gradient(#f0f0f0 80%, #e9e9e9);
  padding-left: 103px;
  gap: 105px;
}
.canvas i {
  width: 48px;
  background: linear-gradient(90deg, #fafafa 0 49%, #d8d8d8 49% 51%, #fff 51%);
}
.errors {
  height: 51px;
  flex: none;
  display: flex;
  align-items: center;
  gap: 6px;
  padding-left: 26px;
  color: #9a9da6;
  background: #30333f;
  border-top: 2px solid #44474f;
  box-sizing: border-box;
}
.errors span {
  margin-right: 6px;
}
.red {
  color: #b04a42;
}
.sand-text {
  color: #cfa873;
}
.crumbs {
  position: relative;
  height: 62px;
  flex: none;
  display: flex;
  align-items: center;
  gap: 12px;
  padding-left: 26px;
  font-size: 25.3px;
  white-space: nowrap;
  overflow: hidden;
}
.teal-text {
  color: #7fa5b2;
}
.green-text {
  color: #a3b46f;
}
.crumb-scroll {
  position: absolute;
  left: 770px;
  bottom: 0;
  width: 474px;
  height: 8px;
  border-radius: 6px 6px 0 0;
  background: #4f8ff0;
}

/* right panel */
.side {
  width: 713px;
  flex: none;
  display: flex;
  flex-direction: column;
  border-left: 2px solid #12141c;
  box-sizing: border-box;
  background: #151925;
}
.side-head {
  height: 60px;
  gap: 27px;
  padding: 0 38px 2px 24px;
  border-bottom: 4px solid #12141c;
}
.side-tools {
  height: 58px;
  flex: none;
  display: flex;
  align-items: center;
  gap: 34px;
  padding: 0 26px 0 26px;
  background: #30333f;
}
.tool-box {
  margin-left: 6px;
}
.tool-indent {
  margin-left: 2px;
}
.side-tree {
  flex: none;
  height: 682px;
  overflow: hidden;
}
.s-row {
  height: 52px;
  display: flex;
  align-items: center;
  gap: 14px;
  position: relative;
  top: -7px;
}
.s-input {
  padding-left: 242px;
}
.s-col {
  padding-left: 176px;
  gap: 16px;
}
.s-blue {
  height: 50px;
  margin: 47px 18px 0 0;
  background: #5595f0;
}
.side-props {
  height: 62px;
  padding-right: 24px;
  background: #30333f;
  gap: 26px;
}
.tail {
  color: #c9ccd5;
}
.side-rows {
  flex: 1;
  display: flex;
  flex-direction: column;
  align-items: flex-end;
  padding-right: 16px;
}
.sr {
  display: flex;
  align-items: center;
  justify-content: flex-end;
  width: 100%;
}
.sr-orange {
  margin-top: 56px;
  height: 52px;
  gap: 12px;
}
.sr-orange .pill {
  width: 200px;
  justify-content: flex-end;
}
.sr-plus {
  height: 48px;
  margin-top: 60px;
  padding-right: 24px;
  box-sizing: border-box;
}
.sr-plus i {
  flex: 1;
  height: 1px;
  background: #3c3f4a;
  margin-top: 10px;
}
.round-plus {
  width: 47px;
  height: 47px;
  border: 2px solid #c8cbd4;
  border-radius: 50%;
  box-sizing: border-box;
  display: flex;
  align-items: center;
  justify-content: center;
}
.sr-tree {
  margin-top: 100px;
  height: 48px;
  gap: 12px;
}
.sr-chev {
  margin-top: 34px;
  padding-right: 6px;
  box-sizing: border-box;
  height: 46px;
  align-items: flex-start;
  border-bottom: 1px solid #3c3f4a;
}
.sr-plus.mt1 {
  margin-top: 53px;
}
.sr-plus + .sr-plus {
  margin-top: 51px;
}

/* bottom bar */
.bottom-bar {
  height: 70px;
  flex: none;
  display: flex;
  align-items: center;
  background: #30333f;
  border-bottom: 5px solid #12141c;
  box-sizing: border-box;
}
.bb-left {
  display: flex;
  align-items: center;
  gap: 30px;
  padding-left: 24px;
  height: 100%;
}
.bb-nudge {
  margin-left: 4px;
}
.bb-target {
  margin-left: -2px;
  white-space: nowrap;
}
.caret {
  width: 0;
  height: 0;
  border: 7px solid transparent;
  border-top: 11px solid #8e9098;
  border-bottom: 0;
  margin-left: -22px;
}
.green-dot {
  width: 26px;
  height: 26px;
  border-radius: 50%;
  background: #a6dd52;
  margin-left: -9px;
}
.bb-right {
  display: flex;
  align-items: center;
  height: 100%;
  padding-right: 6px;
}
.bb-cell {
  height: 100%;
  display: flex;
  align-items: center;
  gap: 12px;
  padding: 0 24px;
  border-right: 1px solid #43464f;
}
.bb-cell:last-child {
  border-right: 0;
}
.publish {
  padding-right: 41px;
}
.output {
  padding-right: 28px;
}
.syscheck {
  padding-right: 18px;
}
.term {
  margin-left: 21px;
}
.output .caret {
  margin-left: 20px;
}
.out-x {
  margin-left: 30px;
}
.gap2 {
  gap: 32px;
}

/* dialogs */
.dialog {
  position: absolute;
  display: flex;
  flex-direction: column;
  background: #151925;
  border-radius: 16px;
  overflow: hidden;
  border-top: 2px solid #55575f;
  box-sizing: border-box;
  box-shadow: 0 10px 40px rgba(0, 0, 0, 0.45);
}
.flow {
  left: 131px;
  top: 228px;
  width: 1540px;
  height: 1439px;
}
.actions {
  left: 1463px;
  top: 408px;
  width: 1278px;
  height: 1359px;
}
.dlg-title {
  position: relative;
  height: 56px;
  flex: none;
  display: flex;
  align-items: center;
  justify-content: center;
  padding: 0 0 4px 128px;
  box-sizing: border-box;
  background: #393c48;
  color: #c9ccd5;
  font-size: 26px;
}
.dlg-title .lights {
  left: 15px;
}
.panel-head {
  height: 58px;
  padding-left: 11px;
  background: #3e414d;
  font-size: 27px;
}
.flow .panel-head {
  border-bottom: 4px solid #12141c;
  height: 60px;
}
.flow-tools {
  height: 58px;
  flex: none;
  display: flex;
  align-items: center;
  gap: 36px;
  padding-left: 26px;
  background: #30333f;
  position: relative;
}
.flow-ban {
  position: absolute;
  left: 749px;
}
.flow-tree {
  position: relative;
  flex: none;
  height: 562px;
  padding-top: 3px;
  box-sizing: border-box;
  background: #151925;
  white-space: nowrap;
  overflow: hidden;
}
.flow-guide {
  position: absolute;
  left: 20px;
  top: 146px;
  bottom: 62px;
  width: 1px;
  background: #3c3f4a;
}
.f-row {
  height: 52px;
  display: flex;
  align-items: center;
  gap: 16px;
  padding-left: 72px;
}
.f-row.top {
  padding-left: 47px;
}
.f-chev {
  position: absolute;
  left: 4px;
}
.arrow-sign {
  margin: 0 -5px 0 2px;
}
.wait-val {
  margin-left: -6px;
}
.f-selected {
  position: relative;
  margin-left: 26px;
  height: 104px;
  background: #5595f0;
  color: #fff;
}
.f-selected .f-row {
  padding-left: 46px;
}
.f-selected .wrapped {
  padding-left: 198px;
  display: block;
  line-height: 52px;
}
.white {
  color: #fff;
}
.teal {
  color: #7fb5ad;
}
.steel {
  color: #7ba3bd;
}
.orange {
  color: #cf9a5e;
}
.sage {
  color: #6f9590;
}
.sand {
  color: #c0a06e;
}
.flow .props-head.head {
  height: 60px;
  background: #30333f;
  border: 0;
}
.flow-props {
  flex: 1;
  padding: 53px 0 0 21px;
  background: #151925;
}
.legend {
  display: flex;
  align-items: center;
  gap: 20px;
  color: #c9ccd5;
  letter-spacing: 5.5px;
  font-size: 25px;
  white-space: nowrap;
}
.legend i {
  width: 20px;
  height: 2px;
  flex: none;
  background: #44474f;
}
.legend b {
  flex: 1;
  height: 2px;
  background: #44474f;
}
.legend.wide {
  width: 780px;
}
.name-row {
  display: flex;
  align-items: center;
  margin: 20px 0 0 96px;
  gap: 18px;
}
.name-input {
  width: 592px;
  height: 38px;
  border-bottom: 2px solid #3c3f4a;
}
.action-row {
  display: flex;
  align-items: center;
  margin: 18px 0 0 81px;
  gap: 6px;
}
.action-row .tag {
  margin-bottom: 4px;
}
.tag {
  padding: 4px 8px;
  border-radius: 6px;
  color: #5a96f0;
  background: #1b2130;
}
.field {
  display: block;
  border-bottom: 2px solid #3c3f4a;
  padding-bottom: 8px;
}
.action-row .field {
  width: 542px;
  padding-left: 8px;
  box-sizing: border-box;
  margin-top: 2px;
}
.pill {
  display: inline-flex;
  align-items: center;
  height: 47px;
  padding: 0 9px;
  box-sizing: border-box;
  border-radius: 5px;
  color: #3a3128;
  font-size: 30px;
  white-space: nowrap;
  overflow: hidden;
}
.green-pill {
  width: 268px;
  background: #a9b86f;
  font-size: 29px;
}
.orange-pill {
  width: 356px;
  background: #cf9a5e;
}
.braces {
  display: inline-flex;
  align-items: center;
  gap: 1px;
  font-size: 30px;
  color: #c8cbd4;
}
.dlg-footer {
  flex: none;
  height: 102px;
  margin-top: auto;
  display: flex;
  align-items: center;
  justify-content: center;
  gap: 28px;
  background: #30333f;
}
.actions .dlg-footer {
  border-top: 2px solid #44474f;
  padding-top: 8px;
  box-sizing: border-box;
  gap: 22px;
}
.btn {
  width: 149px;
  height: 49px;
  border-radius: 25px;
  border: 2px solid #c8cbd4;
  background: transparent;
  color: #c8cbd4;
  font: inherit;
  padding: 0;
}
.btn.primary {
  border-color: #5a96f0;
  color: #5a96f0;
}

/* actions editor */
.act-cols {
  flex: 1;
  min-height: 0;
  display: flex;
}
.act-left {
  position: relative;
  width: 561px;
  flex: none;
  display: flex;
  flex-direction: column;
  border-right: 2px solid #2c2f3a;
}
.act-right {
  flex: 1;
  min-width: 0;
  display: flex;
  flex-direction: column;
}
.act-tools {
  height: 62px;
  flex: none;
  display: flex;
  align-items: center;
  gap: 32px;
  padding: 0 24px 0 28px;
  background: #30333f;
  border-top: 4px solid #12141c;
  box-sizing: border-box;
}
.search {
  width: 258px;
  height: 50px;
  line-height: 46px;
  font-size: 28px;
  color: #62656d;
  border-bottom: 2px solid #3c3f4a;
  margin-top: 8px;
}
.sel-tools {
  padding: 0 27px 0 25px;
  gap: 40px;
}
.act-list {
  flex: 1;
  min-height: 0;
  overflow: hidden;
  margin-top: -5px;
  padding-right: 16px;
  border-bottom: 17px solid #151925;
}
.a-row {
  height: 52px;
  display: flex;
  align-items: center;
  gap: 14px;
  padding-left: 50px;
  white-space: nowrap;
  overflow: hidden;
}
.a-row.child {
  padding-left: 72px;
  gap: 18px;
}
.a-row.sel {
  background: #5595f0;
  color: #fff;
}
.a-chev {
  position: absolute;
  left: 7px;
}
.a-scroll {
  position: absolute;
  right: 0;
  bottom: 0;
  width: 16px;
  height: 20px;
  background: #30333f;
}
.sel-table {
  height: 293px;
  flex: none;
  margin-top: 3px;
  overflow: hidden;
  margin-left: 2px;
}
.sel-row {
  height: 48px;
  display: flex;
  border-bottom: 2px solid #2c2f3a;
  box-sizing: border-box;
}
.sel-row.on {
  background: #5595f0;
  color: #fff;
  font-size: 23.5px;
}
.num {
  width: 68px;
  flex: none;
  border-right: 2px solid #2c2f3a;
  line-height: 46px;
  text-align: right;
  padding-right: 14px;
  box-sizing: border-box;
}
.sel-row.on .num {
  border-right-color: #151925;
}
.cell {
  padding-left: 8px;
  line-height: 46px;
}
.act-props {
  border-top: 2px solid #50535c;
}
.act-form {
  flex: 1;
  min-height: 0;
  padding: 54px 20px 0 21px;
  border-left: 2px solid #2c2f3a;
  overflow: hidden;
}
.form-desc {
  margin: 22px 0 66px;
  line-height: 32px;
  font-size: 25px;
}
.param {
  display: flex;
  align-items: center;
  height: 60px;
}
.legend + .param {
  margin-top: 13px;
}
.param + .param {
  margin-top: 11px;
}
.param .tag {
  width: 130px;
  box-sizing: border-box;
  text-align: right;
  margin-left: 43px;
  padding-right: 8px;
  flex: none;
  white-space: nowrap;
}
.param .field {
  margin: 8px 0 0 5px;
  width: 438px;
  padding-left: 8px;
  box-sizing: border-box;
  flex: none;
}
.param .braces {
  margin-left: 8px;
}
.cache {
  margin-top: 64px;
}
.reload {
  display: flex;
  align-items: center;
  gap: 16px;
  margin: 20px 0 0 191px;
}
.check {
  width: 32px;
  height: 32px;
  border-radius: 7px;
  background: #5595f0;
  display: flex;
  align-items: center;
  justify-content: center;
}

.red-arrow {
  position: absolute;
  left: 0;
  top: 0;
  pointer-events: none;
}
</style>
